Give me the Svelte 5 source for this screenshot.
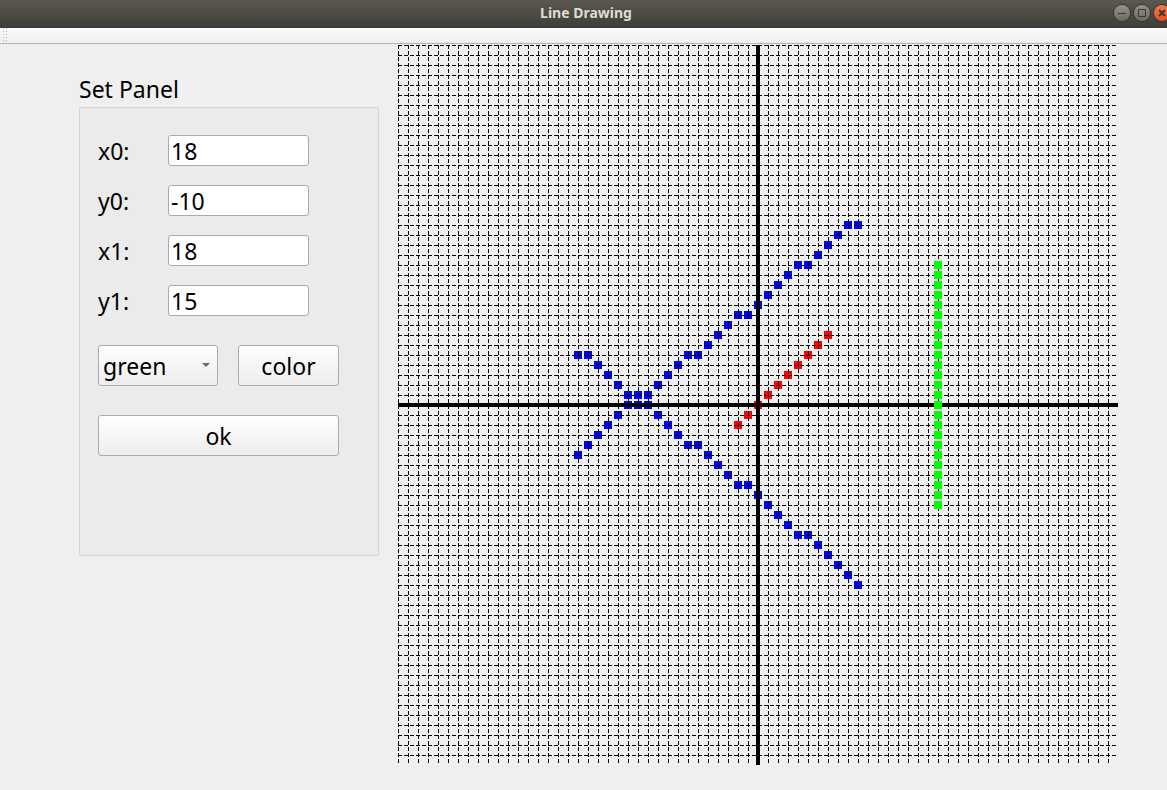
<script lang="ts">
	type Line = { color: string; x: number; ys: number[] };

	const size = 720;
	const cell = 10;
	const mark = 8;
	const center = size / 2;
	const ticks = Array.from({ length: size / cell }, (_, i) => i * cell);

	let fields = $state([
		{ name: 'x0', value: '18' },
		{ name: 'y0', value: '-10' },
		{ name: 'x1', value: '18' },
		{ name: 'y1', value: '15' }
	]);
	let color = $state('green');

	// one y per step, starting at x
	const lines: Line[] = [
		{
			color: '#0000ff',
			x: -18,
			ys: [-5, -4, -3, -2, -1, 0, 0, 1, 2, 3, 4, 5, 5, 6, 7, 8, 9, 9, 10, 11, 12, 13, 14, 14, 15, 16, 17, 18, 18]
		},
		{
			color: '#0000ff',
			x: -18,
			ys: [5, 5, 4, 3, 2, 1, 1, 0, -1, -2, -3, -4, -4, -5, -6, -7, -8, -8, -9, -10, -11, -12, -13, -13, -14, -15, -16, -17, -18]
		},
		{ color: '#ff0000', x: -2, ys: [-2, -1, 0, 1, 2, 3, 4, 5, 6, 7] }
	];

	const greenYs = Array.from({ length: 25 }, (_, i) => i - 10);

	function left(x: number) {
		return center + x * cell - mark / 2;
	}

	function top(y: number) {
		return center - y * cell - mark / 2;
	}
</script>

<div class="window">
	<header class="titlebar">
		<h1>Line Drawing</h1>
		<div class="window-buttons">
			<button type="button" aria-label="Minimize">
				<svg viewBox="0 0 16 16"><path d="M4 8.5h8" /></svg>
			</button>
			<button type="button" aria-label="Maximize">
				<svg viewBox="0 0 16 16"><path d="M4.5 4.5h7v7h-7z" /></svg>
			</button>
			<button type="button" class="close" aria-label="Close">
				<svg viewBox="0 0 16 16"><path d="M5 5l6 6M11 5l-6 6" /></svg>
			</button>
		</div>
	</header>

	<div class="toolbar"><span class="handle"></span></div>

	<main>
		<section class="side">
			<h2>Set Panel</h2>
			<form class="panel" onsubmit={(e) => e.preventDefault()}>
				<div class="fields">
					{#each fields as field (field.name)}
						<div class="field">
							<label for={field.name}>{field.name}:</label>
							<input id={field.name} type="text" bind:value={field.value} />
						</div>
					{/each}
				</div>
				<div class="actions">
					<div class="combo">
						<select aria-label="Line color" bind:value={color}>
							<option>green</option>
							<option>red</option>
							<option>blue</option>
						</select>
						<svg class="arrow" viewBox="0 0 8 4"><path d="M0 0h8L4 4z" /></svg>
					</div>
					<button type="button" class="push">color</button>
				</div>
				<button type="submit" class="push">ok</button>
			</form>
		</section>

		<svg class="plot" viewBox="0 0 {size} {size}" shape-rendering="crispEdges" role="img" aria-label="Grid with lines">
			{#each lines as line}
				{#each line.ys as y, i}
					<rect x={left(line.x + i)} y={top(y)} width={mark} height={mark} fill={line.color} />
				{/each}
			{/each}
			<!-- where the two blue lines cross -->
			<rect x={left(-12)} y={top(0)} width={mark} height={mark} fill="#0000ff" />
			<g class="grid">
				{#each ticks as t}
					<path d="M0 {t + 0.5}H{size}M{t + 0.5} 0V{size}" />
				{/each}
			</g>
			<path class="axes" d="M0 {center}H{size}M{center} 0V{size}" />
			{#each greenYs as y}
				<rect x={left(18)} y={top(y)} width={mark} height={mark} fill="#00ff00" />
			{/each}
		</svg>
	</main>
</div>

<style>
	:global(body) {
		margin: 0;
		background: #efefef;
	}

	.window {
		min-height: 100vh;
		overflow: hidden;
		background: #efefef;
		color: #000;
		font-family: 'Noto Sans', 'Open Sans', sans-serif;
		font-size: 23px;
	}

	/* runs slightly past the right edge, so the close button is cut */
	.titlebar {
		display: grid;
		grid-template-columns: 1fr auto 1fr;
		align-items: center;
		height: 28px;
		margin-right: -5px;
		background: linear-gradient(#5b584f, #3d3d38);
	}

	h1 {
		grid-column: 2;
		margin: 0;
		padding-bottom: 2px;
		color: #dfdbd2;
		font-size: 14px;
		font-weight: 700;
		line-height: 26px;
	}

	.window-buttons {
		display: flex;
		justify-content: flex-end;
		gap: 4px;
		padding: 0 2px 2px 0;
	}

	.window-buttons button {
		width: 16px;
		height: 16px;
		padding: 0;
		border: 0;
		border-radius: 50%;
		background: linear-gradient(#94928b, #6b6962);
		box-shadow: 0 0 0 1px #35342f;
	}

	.window-buttons .close {
		background: linear-gradient(#f47c54, #e2521f);
	}

	.window-buttons svg {
		display: block;
		fill: none;
		stroke: #3a3935;
	}

	.window-buttons .close svg {
		stroke-width: 2;
	}

	.toolbar {
		display: flex;
		box-sizing: border-box;
		height: 16px;
		padding-left: 3px;
		border-bottom: 1px solid #b4b4b4;
		background: linear-gradient(#fbfbfb, #efefef);
	}

	.handle {
		width: 4px;
		background: conic-gradient(at 1px 1px, transparent 75%, #b4b4b4 0) 0 0 / 3px 3px;
	}

	main {
		display: flex;
		align-items: flex-start;
		gap: 19px;
		padding: 1px 49px 25px 79px;
	}

	.side {
		flex: 0 0 300px;
		padding-top: 28px;
	}

	h2 {
		margin: 0;
		padding-bottom: 2px;
		font-size: 23px;
		font-weight: 400;
		line-height: 32px;
	}

	.panel {
		display: flex;
		flex-direction: column;
		gap: 29px;
		box-sizing: border-box;
		min-height: 449px;
		padding: 27px 39px 27px 18px;
		border: 1px solid #d4d4d4;
		border-radius: 2px;
		background: #ebebeb;
	}

	.fields {
		display: flex;
		flex-direction: column;
		gap: 19px;
	}

	.field {
		display: flex;
		align-items: center;
		height: 31px;
	}

	.field label {
		width: 70px;
	}

	.field input {
		box-sizing: border-box;
		width: 141px;
		height: 31px;
		padding: 0 2px;
		border: 1px solid #ababab;
		border-radius: 3px;
		outline: none;
		background: #fff;
		color: inherit;
		font: inherit;
	}

	.actions {
		display: flex;
		gap: 20px;
	}

	.combo {
		position: relative;
		width: 120px;
	}

	.actions .push {
		flex: 1;
	}

	select,
	.push {
		box-sizing: border-box;
		height: 41px;
		padding: 0;
		border: 1px solid #ababab;
		border-radius: 3px;
		background: linear-gradient(#fff, #ededed);
		color: inherit;
		font: inherit;
	}

	select {
		width: 100%;
		padding-left: 4px;
		appearance: none;
	}

	.arrow {
		position: absolute;
		top: 18px;
		right: 8px;
		width: 8px;
		height: 4px;
		fill: #6a6a6a;
		pointer-events: none;
	}

	.plot {
		flex: 0 1 720px;
		min-width: 0;
	}

	.grid {
		fill: none;
		stroke: #000;
		stroke-width: 1;
		stroke-dasharray: 4 2;
	}

	.axes {
		fill: none;
		stroke: #000;
		stroke-width: 4;
	}
</style>
